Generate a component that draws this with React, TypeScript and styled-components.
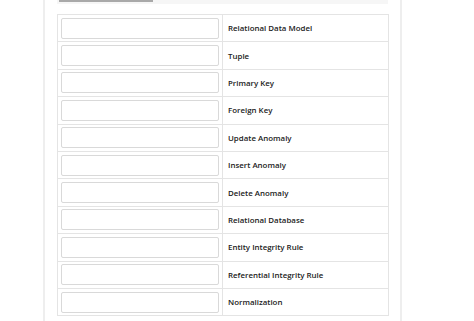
import styled, { createGlobalStyle } from "styled-components";

const GlobalStyle = createGlobalStyle`
  html, body {
    margin: 0;
    padding: 0;
    background: #ffffff;
    font-family: "Open Sans", "Liberation Sans", sans-serif;
  }
`

const Page = styled.div`
  width: 474px;
  height: 321px;
  overflow: hidden;
  padding-left: 43px;
  box-sizing: border-box;
`

const Panel = styled.div`
  width: 359px;
  min-height: 321px;
  box-sizing: border-box;
  border-left: 2px solid #eeeeee;
  border-right: 2px solid #eeeeee;
  padding: 0 12px 0 12px;
`

const TopStrip = styled.div`
  height: 4px;
  background: #f6f6f6;
  margin-bottom: 10px;
`

const ProgressBar = styled.div`
  width: 94px;
  height: 2px;
  margin-left: 2px;
  background: #a9a9a9;
`

const TermTable = styled.div`
  width: 332px;
  border: 1px solid #e4e4e4;
  border-bottom: none;
  box-sizing: border-box;
`

const Row = styled.div`
  display: grid;
  grid-template-columns: 165px 1fr;
  height: 27.4px;
  border-bottom: 1px solid #e4e4e4;
  box-sizing: border-box;
`

const AnswerCell = styled.div`
  display: flex;
  align-items: center;
  padding: 0 3px;
  border-right: 1px solid #e4e4e4;
`

const AnswerInput = styled.input`
  width: 158px;
  height: 21px;
  box-sizing: border-box;
  border: 1px solid #d9d9d9;
  border-radius: 2px;
  background: #ffffff;
  outline: none;
`

const TermCell = styled.div`
  display: flex;
  align-items: center;
  padding-left: 5px;
  font-size: 7.9px;
  font-weight: 650;
  color: #222222;
`

const Terms = [
    "Relational Data Model",
    "Tuple",
    "Primary Key",
    "Foreign Key",
    "Update Anomaly",
    "Insert Anomaly",
    "Delete Anomaly",
    "Relational Database",
    "Entity Integrity Rule",
    "Referential Integrity Rule",
    "Normalization",
];

export default function App() {
    return <>
        <GlobalStyle/>
        <Page>
            <Panel>
                <TopStrip>
                    <ProgressBar/>
                </TopStrip>
                <TermTable>
                    {Terms.map(t => <Row key={t}>
                        <AnswerCell><AnswerInput type="text"/></AnswerCell>
                        <TermCell>{t}</TermCell>
                    </Row>)}
                </TermTable>
            </Panel>
        </Page>
    </>
}
